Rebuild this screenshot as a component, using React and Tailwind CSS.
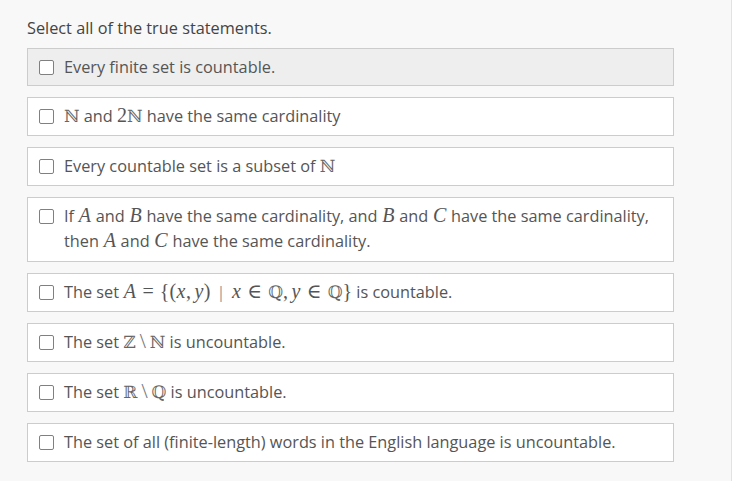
import React from "react";

const M = ({ children }) => (
  <span className="px-[0.5px] text-[20px] italic leading-none" style={{ fontFamily: '"Liberation Serif", serif' }}>{children}</span>
);
const R = ({ children, className = "" }) => (
  <span className={`text-[20px] leading-none ${className}`} style={{ fontFamily: '"Liberation Serif", "DejaVu Serif", serif' }}>{children}</span>
);
const BB = ({ children }) => (
  <span className="text-[17px] font-light leading-none text-[#666666]" style={{ fontFamily: '"DejaVu Serif", serif' }}>{children}</span>
);
const SM = () => (
  <span className="mx-[4px] text-[22px] leading-none text-[#777777]" style={{ fontFamily: '"Liberation Serif", serif' }}>\</span>
);

function Item({ children, highlight, pb = "pb-[6px]" }) {
  return (
    <div
      className={`flex items-start border border-[#cccccc] pl-[11px] pr-3 pt-[6px] leading-[25px] ${pb} ${
        highlight ? "bg-[#eeeeee]" : "bg-white"
      }`}
    >
      <span className="mt-[5px] mr-[10px] inline-block h-[15px] w-[15px] shrink-0 rounded-[2px] border border-[#808080] bg-white" />
      <span>{children}</span>
    </div>
  );
}

export default function App() {
  return (
    <div
      className="h-[481px] w-[732px] border-r border-[#e2e2e2] bg-[#f8f8f8] pl-[27px] pt-[16px] text-[16.3px] text-[#555555]"
      style={{ fontFamily: '"Open Sans", sans-serif' }}
    >
      <div className="leading-[24px] text-[#444444]">Select all of the true statements.</div>
      <div className="mt-[8px] flex w-[647px] flex-col gap-[11px]">
        <Item highlight pb="pb-[5px]">Every finite set is countable.</Item>
        <Item>
          <BB>ℕ</BB> and <R>2</R><BB>ℕ</BB> have the same cardinality
        </Item>
        <Item>
          Every countable set is a subset of <BB>ℕ</BB>
        </Item>
        <Item pb="pb-[7px]">
          If <M>A</M> and <M>B</M> have the same cardinality, and <M>B</M> and <M>C</M> have the same cardinality, then <M>A</M> and <M>C</M> have the same cardinality.
        </Item>
        <Item>
          The set <M>A</M>
          <R className="mx-[6px]">=</R>
          <R>{"{"}(</R>
          <M>x</M>
          <R className="mr-[3px]">,</R>
          <M>y</M>
          <R>)</R>
          <span className="mx-[6px] text-[#999999]">|</span>
          <M>x</M>
          <R className="mx-[6px]">∈</R>
          <BB>ℚ</BB>
          <R className="mr-[3px]">,</R>
          <M>y</M>
          <R className="mx-[6px]">∈</R>
          <BB>ℚ</BB>
          <R>{"}"}</R> is countable.
        </Item>
        <Item>
          The set <BB>ℤ</BB>
          <SM />
          <BB>ℕ</BB> is uncountable.
        </Item>
        <Item>
          The set <BB>ℝ</BB>
          <SM />
          <BB>ℚ</BB> is uncountable.
        </Item>
        <Item>The set of all (finite-length) words in the English language is uncountable.</Item>
      </div>
    </div>
  );
}
